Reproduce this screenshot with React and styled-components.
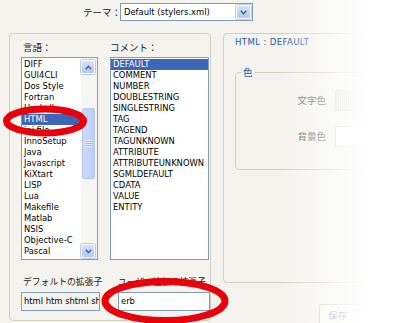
import React from "react";
import styled, { createGlobalStyle } from "styled-components";

const GlobalStyle = createGlobalStyle`
  html, body { margin: 0; padding: 0; background: #f4f3ee; }
  body { font-family: "DejaVu Sans", "Noto Sans CJK JP", sans-serif; }
`;

const Screen = styled.div`
  position: relative;
  width: 400px;
  height: 323px;
  overflow: hidden;
  background: #f4f3ee;
  display: flex;
  flex-direction: column;
`;

const ThemeRow = styled.div`
  display: flex;
  align-items: center;
  height: 18px;
  margin-top: 3px;
  padding-left: 83px;
`;

const JpLabel = styled.span`
  font-family: "Noto Sans CJK JP", "DejaVu Sans", sans-serif;
  font-size: ${(p) => p.$fs || 9.5}px;
  line-height: ${(p) => p.$lh || 13}px;
  color: ${(p) => p.$color || "#222"};
  white-space: nowrap;
`;

const ThemeLabel = styled(JpLabel)`
  width: 37px;
`;

const Select = styled.div`
  width: 133px;
  height: 18px;
  box-sizing: border-box;
  border: 1px solid #7f9db9;
  background: #fff;
  display: flex;
  align-items: center;
  padding: 0 1px 0 3px;
`;

const SelectText = styled.span`
  flex: 1;
  font-size: 8.4px;
  color: #000;
  white-space: nowrap;
`;

const XpButton = styled.div`
  width: ${(p) => p.$w || 14}px;
  height: ${(p) => p.$h || 14}px;
  box-sizing: border-box;
  border: 1px solid #fff;
  border-radius: 2px;
  background: linear-gradient(180deg, #d6e2fc 0%, #c3d4fa 50%, #b4c8f6 100%);
  box-shadow: 0 0 0 1px #bccdf2;
  display: flex;
  align-items: center;
  justify-content: center;
`;

const Main = styled.div`
  display: flex;
  gap: 12px;
  margin-top: 12px;
  padding-left: 9px;
`;

const Panel = styled.div`
  box-sizing: border-box;
  width: ${(p) => p.$w}px;
  height: ${(p) => p.$h}px;
  border: 1px solid #d3d0c2;
  border-radius: 4px;
`;

const LeftPanel = styled(Panel)`
  padding: 7px 0 0 11px;
`;

const Columns = styled.div`
  display: grid;
  grid-template-columns: 77px 99px;
  column-gap: 12px;
`;

const Column = styled.div`
  display: flex;
  flex-direction: column;
`;

const HeadLabel = styled(JpLabel)`
  height: 16px;
  padding-left: ${(p) => p.$indent || 0}px;
`;

const ListBox = styled.div`
  box-sizing: border-box;
  height: 203px;
  border: 1px solid #7f9db9;
  background: #fff;
  display: flex;
  overflow: hidden;
`;

const Items = styled.div`
  flex: 1;
  min-width: 0;
  padding-top: 1px;
`;

const Item = styled.div`
  height: 11px;
  line-height: 11px;
  font-size: 8.4px;
  padding-left: 2px;
  white-space: nowrap;
  color: ${(p) => (p.$sel ? "#fff" : "#000")};
  background: ${(p) => (p.$sel ? "#3c66b8" : "transparent")};
`;

const ScrollBar = styled.div`
  width: 15px;
  padding: 2px 1px 1px 0;
  display: flex;
  flex-direction: column;
  background: #f6f6f2;
`;

const Track = styled.div`
  flex: 1;
  display: flex;
  flex-direction: column;
  align-items: center;
`;

const Thumb = styled.div`
  box-sizing: border-box;
  width: 13px;
  height: 71px;
  margin-top: 34px;
  border: 1px solid #b6c9f1;
  border-radius: 2px;
  background: linear-gradient(90deg, #cbd9fb 0%, #c3d3fa 60%, #b9cbf5 100%);
  display: flex;
  align-items: center;
  justify-content: center;
`;

const Grip = styled.div`
  width: 6px;
  height: 7px;
  background: repeating-linear-gradient(180deg, #eef3fe 0 1px, #9fb4e6 1px 2px);
`;

const ExtRow = styled.div`
  display: grid;
  grid-template-columns: 79px 92px;
  column-gap: 18px;
  margin-top: 15px;
`;

const ExtCell = styled.div`
  display: flex;
  flex-direction: column;
  min-width: 0;
`;

const SubLabel = styled(JpLabel)`
  height: 17px;
  line-height: 14px;
  padding-left: ${(p) => p.$indent || 0}px;
`;

const TextBox = styled.div`
  box-sizing: border-box;
  height: 19px;
  border: 1px solid #7f9db9;
  background: ${(p) => (p.$ro ? "#f4f3ee" : "#fff")};
  font-size: 8.4px;
  line-height: 17px;
  padding-left: 2px;
  white-space: nowrap;
  overflow: hidden;
  color: #000;
`;

const RightCol = styled.div`
  display: flex;
  flex-direction: column;
`;

const RightPanel = styled(Panel)`
  padding: 2px 0 0 11px;
`;

const Title = styled.div`
  font-size: 8.6px;
  letter-spacing: 0.35px;
  line-height: 12px;
  color: #2f55a8;
  white-space: nowrap;
`;

const Group = styled.fieldset`
  box-sizing: border-box;
  width: 160px;
  margin: 18px 0 0 0;
  padding: 12px 0 22px 0;
  border: 1px solid #d3d0c2;
  border-radius: 4px;
`;

const Legend = styled.legend`
  margin-left: 5px;
  padding: 0 2px;
  font-family: "Noto Sans CJK JP", sans-serif;
  font-size: 9.5px;
  line-height: 12px;
  color: #2f55a8;
`;

const ColorGrid = styled.div`
  display: grid;
  grid-template-columns: 90px 40px;
  column-gap: 9px;
  row-gap: 15px;
  align-items: center;
`;

const ColorLabel = styled(JpLabel)`
  text-align: right;
`;

const Swatch = styled.div`
  box-sizing: border-box;
  height: 21px;
  border: 1px solid #d6d4ca;
  background: ${(p) =>
    p.$striped
      ? "repeating-linear-gradient(90deg, #d9d9d2 0 1px, #ecece6 1px 2px)"
      : "#fff"};
`;

const ButtonRow = styled.div`
  padding-left: 96px;
  margin-top: 21px;
`;

const PushButton = styled.div`
  box-sizing: border-box;
  width: 60px;
  height: 22px;
  border: 1px solid #c9c7ba;
  border-radius: 3px;
  background: #f7f7f3;
  font-family: "Noto Sans CJK JP", sans-serif;
  font-size: 9.5px;
  line-height: 20px;
  padding-left: 8px;
  color: #888;
`;

const Fade = styled.div`
  position: absolute;
  top: 0;
  left: 280px;
  width: 120px;
  height: 100%;
  background: linear-gradient(90deg, rgba(255,255,255,0) 0%, rgba(255,255,255,0.55) 38%, #fff 72%, #fff 100%);
  pointer-events: none;
`;

const Marks = styled.svg`
  position: absolute;
  left: 0;
  top: 0;
  pointer-events: none;
`;

const Chevron = ({ up }) => (
  <svg width="7" height="5" viewBox="0 0 7 5">
    <path
      d={up ? "M0.8 4.2 L3.5 1.3 L6.2 4.2" : "M0.8 0.8 L3.5 3.7 L6.2 0.8"}
      fill="none"
      stroke="#4d6185"
      strokeWidth="1.5"
    />
  </svg>
);

const languages = [
  "DIFF", "GUI4CLI", "Dos Style", "Fortran", "Haskell", "HTML", "ini file",
  "InnoSetup", "Java", "Javascript", "KiXtart", "LISP", "Lua", "Makefile",
  "Matlab", "NSIS", "Objective-C", "Pascal",
];

const styles = [
  "DEFAULT", "COMMENT", "NUMBER", "DOUBLESTRING", "SINGLESTRING", "TAG",
  "TAGEND", "TAGUNKNOWN", "ATTRIBUTE", "ATTRIBUTEUNKNOWN", "SGMLDEFAULT",
  "CDATA", "VALUE", "ENTITY",
];

export default function App() {
  return (
    <>
      <GlobalStyle />
      <Screen>
        <ThemeRow>
          <ThemeLabel>テーマ：</ThemeLabel>
          <Select>
            <SelectText>Default (stylers.xml)</SelectText>
            <XpButton $w={15} $h={14}>
              <Chevron />
            </XpButton>
          </Select>
        </ThemeRow>
        <Main>
          <LeftPanel $w={210} $h={288}>
            <Columns>
              <Column>
                <HeadLabel $indent={2}>言語：</HeadLabel>
                <ListBox>
                  <Items>
                    {languages.map((l) => (
                      <Item key={l} $sel={l === "HTML"}>{l}</Item>
                    ))}
                  </Items>
                  <ScrollBar>
                    <XpButton $w={14} $h={14}>
                      <Chevron up />
                    </XpButton>
                    <Track>
                      <Thumb>
                        <Grip />
                      </Thumb>
                    </Track>
                    <XpButton $w={14} $h={14}>
                      <Chevron />
                    </XpButton>
                  </ScrollBar>
                </ListBox>
              </Column>
              <Column>
                <HeadLabel>コメント：</HeadLabel>
                <ListBox>
                  <Items>
                    {styles.map((s) => (
                      <Item key={s} $sel={s === "DEFAULT"}>{s}</Item>
                    ))}
                  </Items>
                </ListBox>
              </Column>
            </Columns>
            <ExtRow>
              <ExtCell>
                <SubLabel $indent={2} $fs={8.8}>デフォルトの拡張子</SubLabel>
                <TextBox $ro>html htm shtml shtm xhtml</TextBox>
              </ExtCell>
              <ExtCell>
                <SubLabel $fs={8.8}>ユーザー追加の拡張子</SubLabel>
                <TextBox>erb</TextBox>
              </ExtCell>
            </ExtRow>
          </LeftPanel>
          <RightCol>
            <RightPanel $w={200} $h={250}>
              <Title>HTML : DEFAULT</Title>
              <Group>
                <Legend>色</Legend>
                <ColorGrid>
                  <ColorLabel $color="#555">文字色</ColorLabel>
                  <Swatch $striped />
                  <ColorLabel $color="#555">背景色</ColorLabel>
                  <Swatch />
                </ColorGrid>
              </Group>
            </RightPanel>
            <ButtonRow>
              <PushButton>保存</PushButton>
            </ButtonRow>
          </RightCol>
        </Main>
        <Fade />
        <Marks width="400" height="323" viewBox="0 0 400 323">
          <ellipse cx="45" cy="121" rx="38.5" ry="12" fill="none" stroke="#e8000b" strokeWidth="7" />
          <ellipse cx="165" cy="301" rx="60" ry="19.5" fill="none" stroke="#e8000b" strokeWidth="7" />
        </Marks>
      </Screen>
    </>
  );
}
